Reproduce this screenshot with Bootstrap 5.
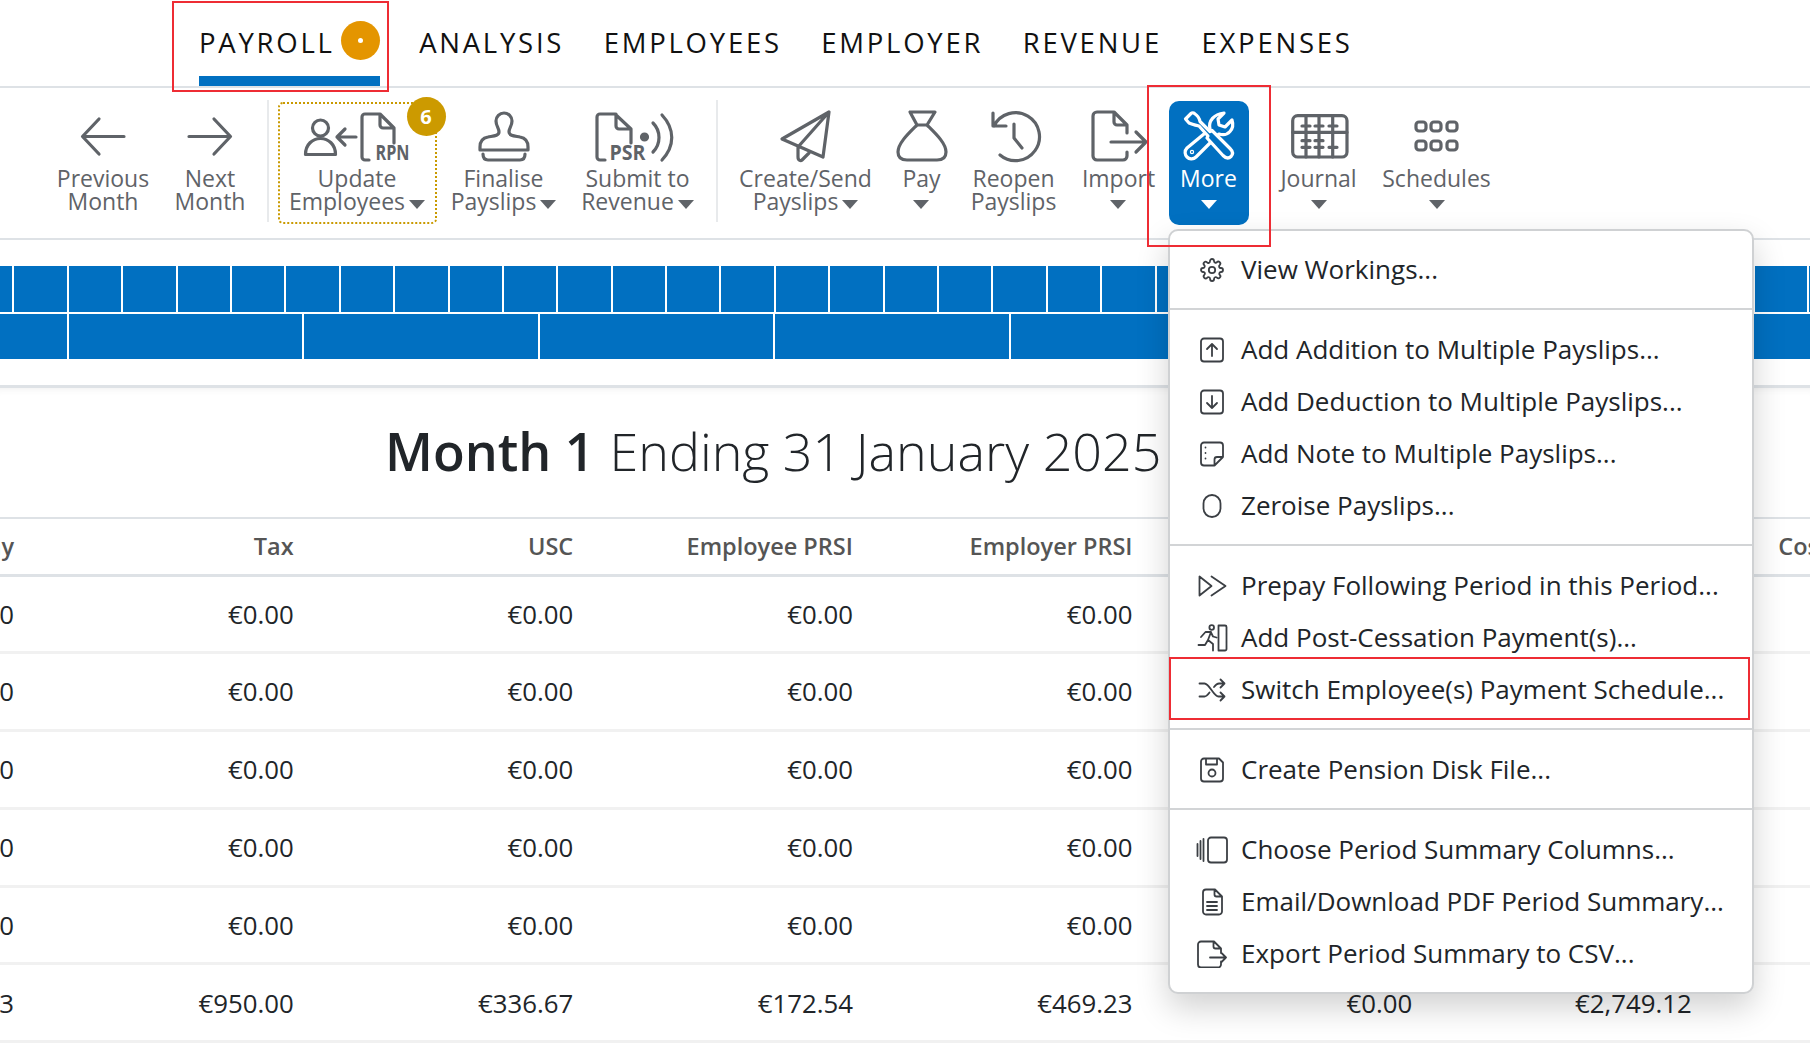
<!DOCTYPE html>
<html lang="en">
<head>
<meta charset="UTF-8" />
<title>Payroll</title>
<link href="https://cdn.jsdelivr.net/npm/bootstrap@5.3.3/dist/css/bootstrap.min.css" rel="stylesheet" />
<style>
  html, body { height: 100%; }
  body { margin: 0; overflow: hidden; background: #fff; color: #212529; font-family: "Open Sans", "Noto Sans", sans-serif; position: relative; }

  /* top tabs */
  .tabbar { height: 88px; padding-left: 199px; border-bottom: 2px solid #dee2e6; gap: 39.5px; }
  .tab-link { height: 86px; padding: 10px 0 0; display: flex; align-items: center; gap: 6px; font-size: 27.5px; letter-spacing: 2.75px; color: #111; border-bottom: 10px solid transparent; }
  .tab-link:hover { color: #111; }
  .tab-link.on { border-bottom-color: #0170c1; }
  .tab-dot { width: 39px; height: 39px; border-radius: 50%; background: #e49500; display: flex; align-items: center; justify-content: center; margin-top: -5px; }
  .tab-dot::after { content: ""; width: 5px; height: 5px; border-radius: 50%; background: #fff; }

  /* toolbar */
  .toolbar { height: 152px; padding-left: 49.5px; border-bottom: 2px solid #dee2e6; }
  .tool { display: flex; flex-direction: column; align-items: center; text-align: center; font-size: 23px; line-height: 23px; color: #5f6368; height: 124px; margin-top: 13px; padding-top: 4px; flex: none; position: relative; }
  .tool svg { display: block; fill: none; stroke: currentColor; stroke-width: 3.2; stroke-linecap: round; stroke-linejoin: round; flex: none; overflow: visible; }
  .tool .lbl { margin-top: 2px; white-space: nowrap; }
  .tool svg text { fill: currentColor; stroke: none; font-family: "Open Sans", sans-serif; font-weight: 700; font-size: 21px; }
  .caret { display: inline-block; width: 0; height: 0; border-left: 8px solid transparent; border-right: 8px solid transparent; border-top: 9px solid currentColor; vertical-align: 1px; margin-left: 4px; }
  .caret.solo { margin-left: 0; }
  .tsep { width: 2px; height: 122px; margin-top: 12px; background: #e8eaec; flex: none; }
  .tsep-a { margin-left: 3px; }
  .tsep-b { margin-left: 10px; }
  .w-a { width: 107px; }
  .w-upd { width: 159px; border: 2px dotted #c99a00; border-radius: 5px; padding-top: 0; height: 122px; margin: 14px 1px 0 9px; }
  .w-upd svg { margin-top: 1px; }
  .w-fin { width: 132px; }
  .w-sub { width: 136px; }
  .w-cre { width: 156px; margin-left: 10px; }
  .w-pay { width: 76px; }
  .w-reo { width: 108px; }
  .w-imp { width: 102px; }
  .w-more { width: 80px; background: #0170c1; color: #fff; border-radius: 10px; margin-left: -1px; }
  .w-jou { width: 140px; }
  .w-sch { width: 96px; }
  .count6 { position: absolute; top: -7px; right: -11px; width: 39px; height: 39px; border-radius: 50%; background: #cc9a00; color: #fff; font-weight: 700; font-size: 20px; display: flex; align-items: center; justify-content: center; }

  /* blue timeline */
  .bars { margin-top: 26px; overflow: hidden; }
  .bar-row { display: flex; gap: 2px; margin-bottom: 2px; }
  .bar-row i { flex: none; background: #0170c1; display: block; }
  .bar-top { height: 46px; margin-left: -40px; }
  .bar-top i { width: 52.4px; }
  .bar-bot { height: 45px; margin-left: -166.4px; }
  .bar-bot i { width: 233.4px; }

  .titlebar { margin-top: 24px; height: 134px; padding: 0 0 4px 385px; border-top: 3px solid #dee2e6; border-bottom: 2px solid #dee2e6; display: flex; align-items: center; font-size: 52px; box-shadow: inset 0 8px 8px -8px rgba(0,0,0,.08); white-space: nowrap; }
  .titlebar b { font-weight: 600; margin-right: 15px; }
  .titlebar span { font-weight: 300; color: #212529; }

  /* table */
  .paytable { table-layout: fixed; width: 2237px; margin-left: -265.6px; margin-bottom: 0; font-size: 25.8px; }
  .paytable th, .paytable td { width: 279.6px; text-align: right; padding: 0; vertical-align: middle; white-space: nowrap; box-shadow: none; }
  .paytable th { height: 56px; font-size: 23.5px; font-weight: 600; color: #555; border-bottom: 3px solid #dee2e6; }
  .paytable td { height: 77.8px; color: #212529; border-bottom: 3px solid #f1f1f1; }

  /* more menu */
  .more-menu { display: block; left: 1168px; top: 229px; width: 586px; height: 765px; padding: 12.5px 0 0; margin: 0; border: 2px solid #cfd1d3; border-radius: 10px; box-shadow: 0 14px 32px rgba(0,0,0,.18); }
  .more-menu .dropdown-item { height: 52px; padding: 0 0 0 26px; display: flex; align-items: center; gap: 13px; font-size: 26px; color: #212529; }
  .more-menu .dropdown-item svg { flex: none; fill: none; stroke: #3b3f44; stroke-width: 1.8; stroke-linecap: round; stroke-linejoin: round; }
  .more-menu .dropdown-divider { margin: 12px 0 14px; border-top: 2px solid #d2d4d6; opacity: 1; }

  /* red callouts from the screenshot */
  .callout { position: absolute; border: 2px solid #ee2c34; pointer-events: none; z-index: 1100; }
  .call-tab { left: 172px; top: 1px; width: 217px; height: 91px; }
  .call-more { left: 1147px; top: 85px; width: 124px; height: 162px; }
  .call-switch { left: 1169px; top: 657px; width: 581px; height: 63px; }
</style>
</head>
<body>
  <nav class="nav tabbar">
    <a class="nav-link tab-link on" href="#">PAYROLL<span class="tab-dot"></span></a>
    <a class="nav-link tab-link" href="#">ANALYSIS</a>
    <a class="nav-link tab-link" href="#">EMPLOYEES</a>
    <a class="nav-link tab-link" href="#">EMPLOYER</a>
    <a class="nav-link tab-link" href="#">REVENUE</a>
    <a class="nav-link tab-link" href="#">EXPENSES</a>
  </nav>

  <div class="toolbar d-flex">
    <div class="tool w-a">
      <svg width="48" height="60" viewBox="0 0 48 60"><path d="M45 31.5H4M20 14 3.5 31.5 20 49"/></svg>
      <div class="lbl">Previous<br>Month</div>
    </div>
    <div class="tool w-a">
      <svg width="48" height="60" viewBox="0 0 48 60"><path d="M3 31.5H44M28 14 44.5 31.5 28 49"/></svg>
      <div class="lbl">Next<br>Month</div>
    </div>
    <div class="tsep tsep-a"></div>
    <div class="tool w-upd">
      <svg width="110" height="60" viewBox="0 0 110 60">
        <circle cx="18.5" cy="23" r="8"/>
        <path d="M3.5 49.5c0-10 7-16 15-16s15 6 15 16z"/>
        <path d="M54 32H35M43 24l-8 8 8 8"/>
        <path d="M67 55h-4a3 3 0 0 1-3-3V12a3 3 0 0 1 3-3h15l14 14v15M78 9v11a3 3 0 0 0 3 3h11"/>
        <text x="73.5" y="55" textLength="34" lengthAdjust="spacingAndGlyphs">RPN</text>
      </svg>
      <div class="lbl">Update<br>Employees<span class="caret"></span></div>
      <span class="count6">6</span>
    </div>
    <div class="tool w-fin">
      <svg width="52" height="60" viewBox="0 0 52 60">
        <path d="M18 16a8 8 0 0 1 16 0c0 5-3 7-3 11s6 4 11 5c6 1 8 5 8 10v3H2v-3c0-5 2-9 8-10 5-1 11-1 11-5s-3-6-3-11z"/>
        <path d="M5 49c0 4 2 6 5 6h32c3 0 5-2 5-6"/>
      </svg>
      <div class="lbl">Finalise<br>Payslips<span class="caret"></span></div>
    </div>
    <div class="tool w-sub">
      <svg width="85" height="60" viewBox="0 0 85 60">
        <path d="M10 55H5a3 3 0 0 1-3-3V12a3 3 0 0 1 3-3h15l16 15v14M21 9v12a3 3 0 0 0 3 3h12"/>
        <text x="14.5" y="55" textLength="36" lengthAdjust="spacingAndGlyphs">PSR</text>
        <circle cx="49.5" cy="32" r="3" fill="currentColor"/>
        <path d="M58 18c8 8 8 21 0 29M67 10c13 14 13 31 0 45"/>
      </svg>
      <div class="lbl">Submit to<br>Revenue<span class="caret"></span></div>
    </div>
    <div class="tsep tsep-b"></div>
    <div class="tool w-cre">
      <svg width="56" height="60" viewBox="0 0 56 60">
        <path d="M51 7 4 34l41 18zM51 7 20 42M20 42v10c0 4 3 4 4 3l7-7"/>
      </svg>
      <div class="lbl">Create/Send<br>Payslips<span class="caret"></span></div>
    </div>
    <div class="tool w-pay">
      <svg width="56" height="60" viewBox="0 0 56 60">
        <path d="M16 7h25l-8 13H23zM23 20C15 28 4 38 4 47c0 6 4 8 9 8h30c5 0 9-2 9-8 0-9-11-19-19-27"/>
      </svg>
      <div class="lbl">Pay<br><span class="caret solo"></span></div>
    </div>
    <div class="tool w-reo">
      <svg width="56" height="60" viewBox="0 0 56 60">
        <path d="M8 21A24 24 0 1 1 14 50M7 8v13h13M28 19v14l8 10"/>
      </svg>
      <div class="lbl">Reopen<br>Payslips</div>
    </div>
    <div class="tool w-imp">
      <svg width="60" height="60" viewBox="0 0 60 60">
        <path d="M38 28v-8L25 7H8a4 4 0 0 0-4 4v40a4 4 0 0 0 4 4h26a4 4 0 0 0 4-4v-4M25 7v10a3 3 0 0 0 3 3h10M22 37h35M47 27l10 10-10 10"/>
      </svg>
      <div class="lbl">Import<br><span class="caret solo"></span></div>
    </div>
    <div class="tool w-more">
      <svg width="56" height="60" viewBox="0 0 56 60">
        <path d="M29 24c-2-8 4-15 14-16l-6 6 1 6 6 2 7-7c3 9-4 17-13 14L15 52c-3 3-7 2-9 0s-3-6 0-9z"/>
        <circle cx="11" cy="47" r=".6"/>
        <path fill="#0170c1" d="M4.5 14l5.500-5.500c1-1 2.500-1 3.500 0 3 2 5 5 5.500 8l10 10 2-1 18 18c3 3 3 6 1 8s-5 2-8-1L26 33l1-2-9-10c-4-1-8-2-10-3z"/>
      </svg>
      <div class="lbl">More<br><span class="caret solo"></span></div>
    </div>
    <div class="tool w-jou">
      <svg width="60" height="60" viewBox="0 0 60 60">
        <rect x="3.7" y="10.7" width="54.3" height="41.3" rx="5"/>
        <path d="M3.7 27.3h54.300M17 10.700v41.300M30 10.700v41.300M43.700 10.700v41.300M13 21h8M26 21h8M40 21h8M13 35.700h8M26 35.700h8M13 42.300h8M26 42.300h8M40 42.300h8"/>
      </svg>
      <div class="lbl">Journal<br><span class="caret solo"></span></div>
    </div>
    <div class="tool w-sch">
      <svg width="48" height="60" viewBox="0 0 48 60">
        <rect x="3" y="17" width="10" height="9" rx="3"/><rect x="18" y="17" width="10" height="9" rx="3"/><rect x="34" y="17" width="10" height="9" rx="3"/>
        <rect x="3" y="36" width="10" height="9" rx="3"/><rect x="18" y="36" width="10" height="9" rx="3"/><rect x="34" y="36" width="10" height="9" rx="3"/>
      </svg>
      <div class="lbl">Schedules<br><span class="caret solo"></span></div>
    </div>
  </div>

  <div class="bars">
    <div class="bar-row bar-top" id="barTop"></div>
    <div class="bar-row bar-bot" id="barBot"></div>
  </div>

  <div class="titlebar"><b>Month 1</b><span>Ending 31 January 2025</span></div>

  <table class="table paytable">
    <thead>
      <tr><th>Gross Pay</th><th>Tax</th><th>USC</th><th>Employee PRSI</th><th>Employer PRSI</th><th></th><th></th><th>Cost to Employer</th></tr>
    </thead>
    <tbody id="rows"></tbody>
  </table>

  <ul class="dropdown-menu more-menu position-absolute">
    <li><a class="dropdown-item" href="#"><svg width="32" height="28" viewBox="-4 -2 32 28"><path d="M19.4 15a1.65 1.65 0 0 0 .33 1.82l.06.06a2 2 0 0 1-2.83 2.83l-.06-.06a1.65 1.65 0 0 0-2.82 1.18V21a2 2 0 0 1-4 0v-.09A1.65 1.65 0 0 0 7.18 19.73l-.06.06a2 2 0 0 1-2.83-2.83l.06-.06A1.65 1.65 0 0 0 3.09 14H3a2 2 0 0 1 0-4h.09a1.65 1.65 0 0 0 1.18-2.82l-.06-.06a2 2 0 0 1 2.83-2.83l.06.06A1.65 1.65 0 0 0 10 3.09V3a2 2 0 0 1 4 0v.09a1.65 1.65 0 0 0 2.82 1.18l.06-.06a2 2 0 0 1 2.83 2.83l-.06.06A1.65 1.65 0 0 0 20.91 10H21a2 2 0 0 1 0 4h-.09a1.65 1.65 0 0 0-1.51 1z"/><circle cx="12" cy="12" r="3.2"/></svg>View Workings...</a></li>
    <li><hr class="dropdown-divider"></li>
    <li><a class="dropdown-item" href="#"><svg width="32" height="28" viewBox="0 0 32 28"><rect x="5" y="2.5" width="22" height="23" rx="3"/><path d="M16 20V8M11 13l5-5 5 5"/></svg>Add Addition to Multiple Payslips...</a></li>
    <li><a class="dropdown-item" href="#"><svg width="32" height="28" viewBox="0 0 32 28"><rect x="5" y="2.5" width="22" height="23" rx="3"/><path d="M16 8v12M11 15l5 5 5-5"/></svg>Add Deduction to Multiple Payslips...</a></li>
    <li><a class="dropdown-item" href="#"><svg width="32" height="28" viewBox="0 0 32 28"><path d="M8 2.5h16a3 3 0 0 1 3 3V17l-8.5 8.5H8a3 3 0 0 1-3-3v-17a3 3 0 0 1 3-3zM27 17h-6a2.5 2.5 0 0 0-2.5 2.5v6M9.5 7.5v.1M9.5 13v.1M9.5 18.5v.1"/></svg>Add Note to Multiple Payslips...</a></li>
    <li><a class="dropdown-item" href="#"><svg width="32" height="28" viewBox="0 0 32 28"><rect x="7.5" y="3" width="17" height="22" rx="8.5"/></svg>Zeroise Payslips...</a></li>
    <li><hr class="dropdown-divider"></li>
    <li><a class="dropdown-item" href="#"><svg width="32" height="28" viewBox="0 0 32 28"><path d="M3.5 4.5v19l12-9.5zM15.5 4.5l14 9.5-14 9.5"/></svg>Prepay Following Period in this Period...</a></li>
    <li><a class="dropdown-item" href="#"><svg width="32" height="28" viewBox="0 0 32 28"><circle cx="15.7" cy="3.5" r="2.3"/><path d="M5 13l4.500-5H15l-3 8 5 4v6.500M12 16l-3 5H2.500M15 8.500l2 4 3.500 1M22.500 1.500h6.500a1.500 1.500 0 0 1 1.500 1.500v22a1.500 1.500 0 0 1-1.500 1.500h-6.500z"/></svg>Add Post-Cessation Payment(s)...</a></li>
    <li><a class="dropdown-item" href="#"><svg width="32" height="28" viewBox="0 0 32 28"><path d="M3.5 7.500h5c5 0 9 13 14 13h6M3.500 20.500h5c2 0 3.500-2 5-4M18 11c1.500-2 3-3.500 5-3.500h5.500M24.500 3.500l4 4-4 4M24.500 16.500l4 4-4 4"/></svg>Switch Employee(s) Payment Schedule...</a></li>
    <li><hr class="dropdown-divider"></li>
    <li><a class="dropdown-item" href="#"><svg width="32" height="28" viewBox="0 0 32 28"><path d="M8 2.500h15l4 4v16a3 3 0 0 1-3 3H8a3 3 0 0 1-3-3v-17a3 3 0 0 1 3-3zM10 2.500v6h11v-6"/><circle cx="16" cy="17" r="3.500"/></svg>Create Pension Disk File...</a></li>
    <li><hr class="dropdown-divider"></li>
    <li><a class="dropdown-item" href="#"><svg width="32" height="28" viewBox="0 0 32 28"><rect x="12" y="1.500" width="19" height="25" rx="3"/><path d="M1.500 8v12M4.500 5v18M7.500 3v22"/></svg>Choose Period Summary Columns...</a></li>
    <li><a class="dropdown-item" href="#"><svg width="32" height="28" viewBox="0 0 32 28"><path d="M10 1.500h9l7 7v15a3 3 0 0 1-3 3H10a3 3 0 0 1-3-3v-19a3 3 0 0 1 3-3zM18.500 1.500v5a2 2 0 0 0 2 2H26M11 14h10M11 18h10M11 22h10"/></svg>Email/Download PDF Period Summary...</a></li>
    <li><a class="dropdown-item" href="#"><svg width="32" height="28" viewBox="0 0 32 28"><path d="M25 13V8.500L18 1.500H5a3 3 0 0 0-3 3v20a3 3 0 0 0 3 3h17a3 3 0 0 0 3-3v-3M17.500 1.500v5a2 2 0 0 0 2 2H25M14 17.500h16M25 12.500l5 5-5 5"/></svg>Export Period Summary to CSV...</a></li>
  </ul>

  <div class="callout call-tab"></div>
  <div class="callout call-more"></div>
  <div class="callout call-switch"></div>

  <script src="https://cdn.jsdelivr.net/npm/bootstrap@5.3.3/dist/js/bootstrap.bundle.min.js"></script>
  <script>
    // timeline cells, weeks on top and months underneath
    document.getElementById("barTop").innerHTML = "<i></i>".repeat(36);
    document.getElementById("barBot").innerHTML = "<i></i>".repeat(10);

    // columns six and seven sit behind the open menu, only the totals row shows
    const zero = "€0.00";
    const rows = [];
    for (let i = 0; i < 5; i++) rows.push([zero, zero, zero, zero, zero, "", "", ""]);
    rows.push(["€4,677.53", "€950.00", "€336.67", "€172.54", "€469.23", zero, "€2,749.12", ""]);
    document.getElementById("rows").innerHTML = rows
      .map((r) => "<tr>" + r.map((v) => `<td>${v}</td>`).join("") + "</tr>")
      .join("");
  </script>
</body>
</html>
